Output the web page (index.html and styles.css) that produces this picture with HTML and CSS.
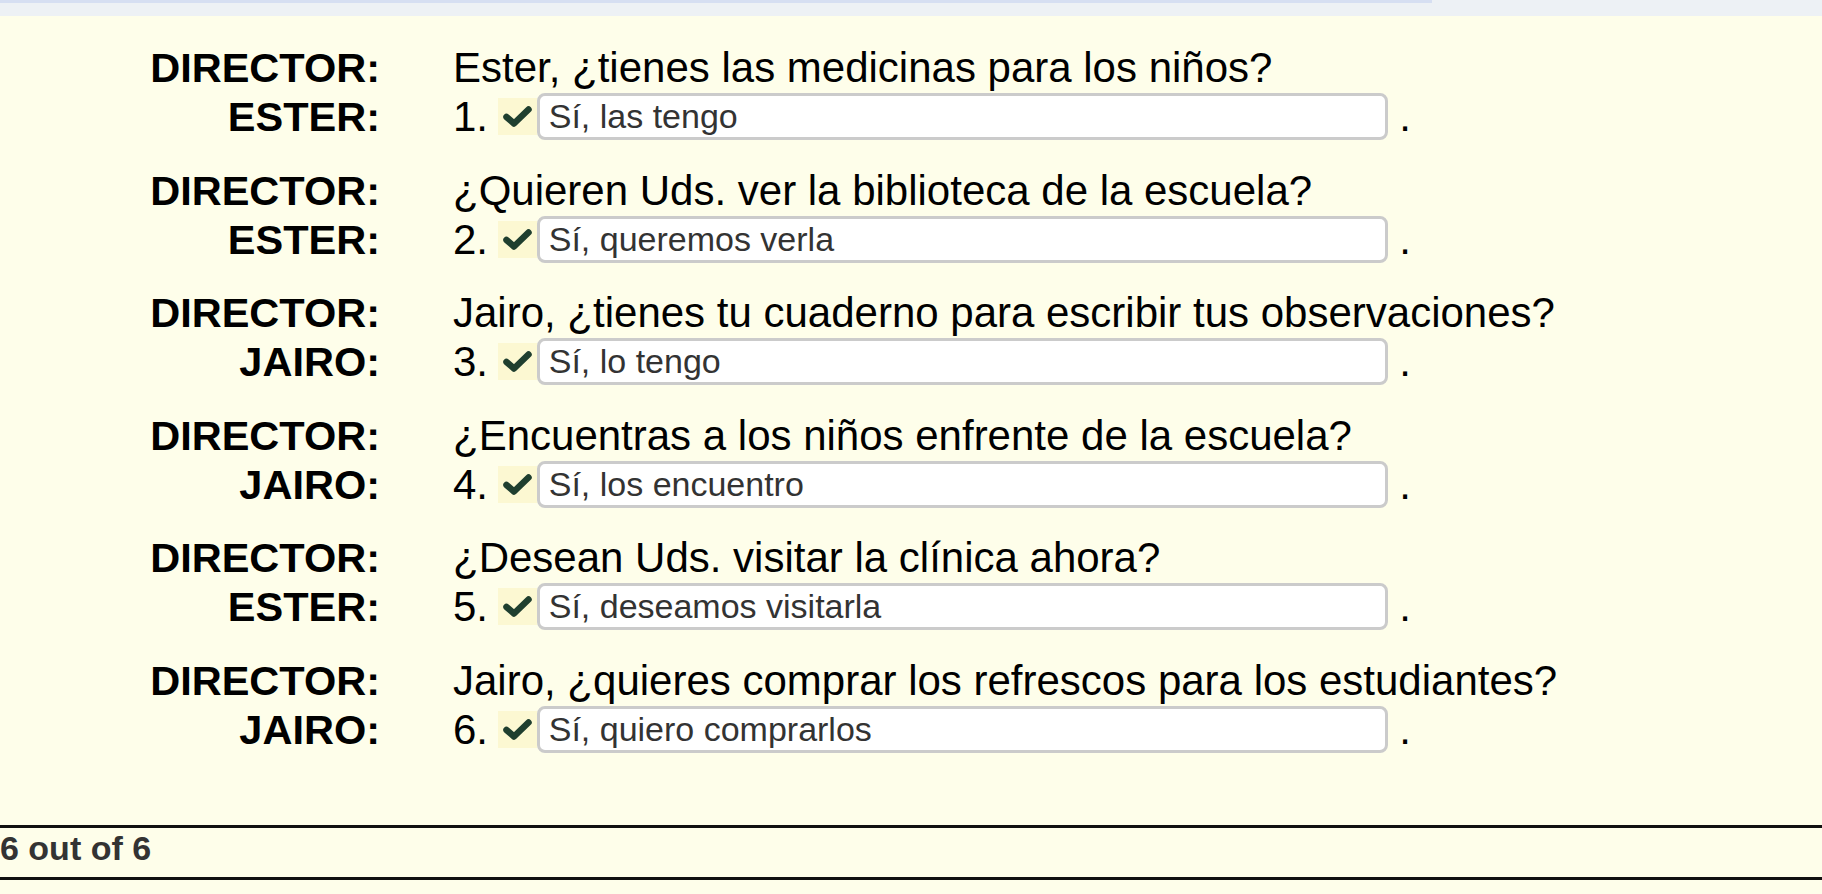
FILE: index.html
```html
<!DOCTYPE html>
<html lang="en">
<head>
    <meta charset="UTF-8">
    <meta name="viewport" content="width=device-width, initial-scale=1.0">
    <title>Diálogo</title>
    <link rel="stylesheet" href="styles.css">
</head>
<body>
<div class="topbar"><div class="progress"></div></div>
<div class="exercise">
    <div class="pair">
        <div class="speaker">DIRECTOR:</div>
        <div class="line">Ester, ¿tienes las medicinas para los niños?</div>
        <div class="speaker">ESTER:</div>
        <div class="line answer">1.&nbsp;<span class="mark"><svg viewBox="0 0 29 21"><polyline points="3.5,11 11,17.5 25.5,3.5"/></svg></span><input type="text" value="Sí, las tengo">&nbsp;.</div>
    </div>
    <div class="pair">
        <div class="speaker">DIRECTOR:</div>
        <div class="line">¿Quieren Uds. ver la biblioteca de la escuela?</div>
        <div class="speaker">ESTER:</div>
        <div class="line answer">2.&nbsp;<span class="mark"><svg viewBox="0 0 29 21"><polyline points="3.5,11 11,17.5 25.5,3.5"/></svg></span><input type="text" value="Sí, queremos verla">&nbsp;.</div>
    </div>
    <div class="pair">
        <div class="speaker">DIRECTOR:</div>
        <div class="line">Jairo, ¿tienes tu cuaderno para escribir tus observaciones?</div>
        <div class="speaker">JAIRO:</div>
        <div class="line answer">3.&nbsp;<span class="mark"><svg viewBox="0 0 29 21"><polyline points="3.5,11 11,17.5 25.5,3.5"/></svg></span><input type="text" value="Sí, lo tengo">&nbsp;.</div>
    </div>
    <div class="pair">
        <div class="speaker">DIRECTOR:</div>
        <div class="line">¿Encuentras a los niños enfrente de la escuela?</div>
        <div class="speaker">JAIRO:</div>
        <div class="line answer">4.&nbsp;<span class="mark"><svg viewBox="0 0 29 21"><polyline points="3.5,11 11,17.5 25.5,3.5"/></svg></span><input type="text" value="Sí, los encuentro">&nbsp;.</div>
    </div>
    <div class="pair">
        <div class="speaker">DIRECTOR:</div>
        <div class="line">¿Desean Uds. visitar la clínica ahora?</div>
        <div class="speaker">ESTER:</div>
        <div class="line answer">5.&nbsp;<span class="mark"><svg viewBox="0 0 29 21"><polyline points="3.5,11 11,17.5 25.5,3.5"/></svg></span><input type="text" value="Sí, deseamos visitarla">&nbsp;.</div>
    </div>
    <div class="pair">
        <div class="speaker">DIRECTOR:</div>
        <div class="line">Jairo, ¿quieres comprar los refrescos para los estudiantes?</div>
        <div class="speaker">JAIRO:</div>
        <div class="line answer">6.&nbsp;<span class="mark"><svg viewBox="0 0 29 21"><polyline points="3.5,11 11,17.5 25.5,3.5"/></svg></span><input type="text" value="Sí, quiero comprarlos">&nbsp;.</div>
    </div>
</div>
<div class="score">6 out of 6</div>
</body>
</html>
```

FILE: styles.css
```css
body {
    margin: 0;
    background-color: #fefeea;
    font-family: "Liberation Sans", Arial, Helvetica, sans-serif;
    color: #000;
}

.topbar {
    height: 16px;
    background-color: #edf1f5;
}

.progress {
    width: 1432px;
    height: 3px;
    background-color: #d6dff2;
}

.exercise {
    padding-top: 27px;
    height: 780px;
    box-sizing: border-box;
}

.pair {
    display: grid;
    grid-template-columns: 380px 1fr;
    column-gap: 73px;
    margin-bottom: 24.5px;
    font-size: 42px;
    line-height: 49px;
}

.speaker {
    font-weight: bold;
    font-size: 41.5px;
    text-align: right;
}

.answer {
    display: flex;
    align-items: center;
    height: 49px;
    white-space: pre;
}

.mark {
    display: inline-flex;
    align-items: center;
    justify-content: center;
    width: 39px;
    height: 37px;
    margin-left: -2px;
    background-color: #fcf8d2;
}

.mark svg {
    width: 29px;
    height: 21px;
    fill: none;
    stroke: #1f3f2f;
    stroke-width: 6.5;
    stroke-linecap: round;
    stroke-linejoin: round;
}

.answer input {
    width: 851px;
    height: 47px;
    box-sizing: border-box;
    padding: 0 9px;
    border: 3px solid #cbcbcb;
    border-radius: 8px;
    background-color: #fff;
    font-family: inherit;
    font-size: 34px;
    color: #333;
    outline: none;
}

.score {
    margin-top: 29px;
    border-top: 3px solid #111;
    border-bottom: 3px solid #111;
    height: 40px;
    padding-bottom: 9px;
    line-height: 40px;
    font-size: 34px;
    font-weight: bold;
    color: #333;
}
```
